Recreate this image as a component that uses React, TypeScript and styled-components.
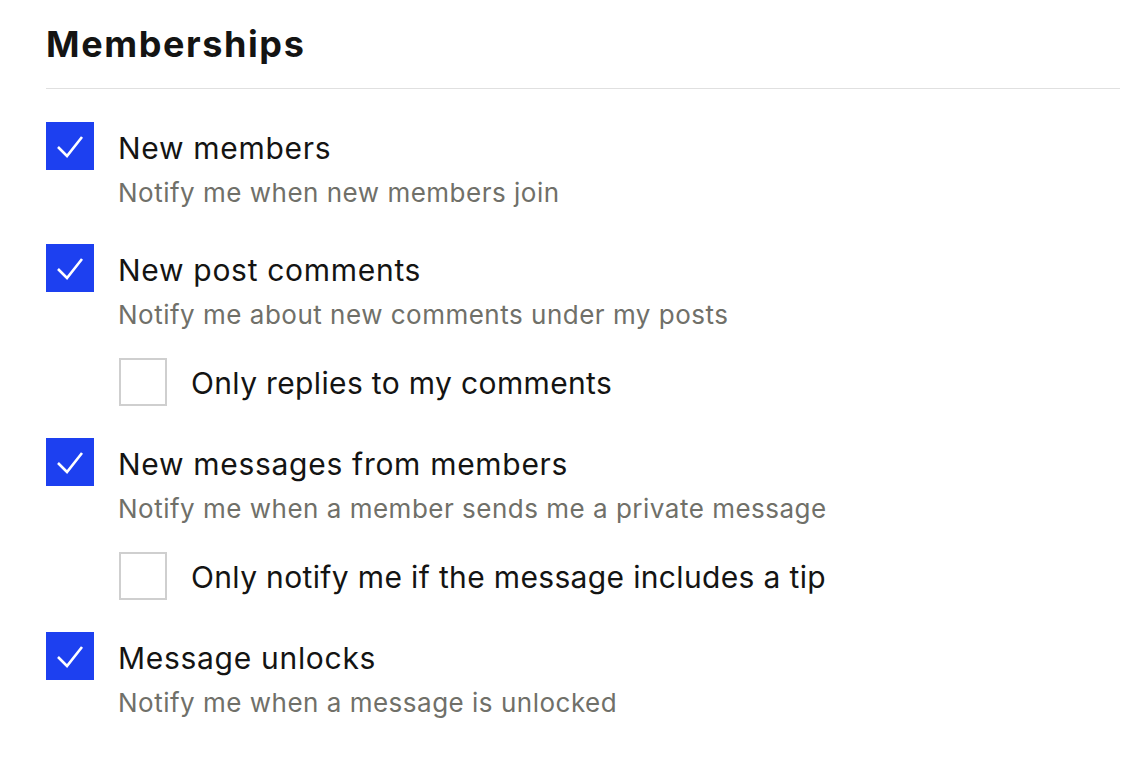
import styled, { createGlobalStyle } from "styled-components";

const GlobalStyle = createGlobalStyle`
  body {
    margin: 0;
    background: #ffffff;
    font-family: Inter, "Liberation Sans", sans-serif;
    color: #141413;
  }
`;

interface Option {
  title: string;
  hint?: string;
  checked: boolean;
  sub?: { title: string; checked: boolean };
}

const options: Option[] = [
  { title: "New members", hint: "Notify me when new members join", checked: true },
  {
    title: "New post comments",
    hint: "Notify me about new comments under my posts",
    checked: true,
    sub: { title: "Only replies to my comments", checked: false },
  },
  {
    title: "New messages from members",
    hint: "Notify me when a member sends me a private message",
    checked: true,
    sub: { title: "Only notify me if the message includes a tip", checked: false },
  },
  { title: "Message unlocks", hint: "Notify me when a message is unlocked", checked: true },
];

const Check = ({ checked }: { checked: boolean }) => (
  <StyledBox $checked={checked}>
    {checked && (
      <svg width="48" height="48" viewBox="0 0 48 48" fill="none">
        <path d="M12 25L21 34L36 15" stroke="#fff" strokeWidth="2.6" />
      </svg>
    )}
  </StyledBox>
);

const App = () => {
  return (
    <>
      <GlobalStyle />
      <StyledSection>
        <StyledTitle>Memberships</StyledTitle>
        <StyledList>
          {options.map((o) => (
            <StyledGroup key={o.title}>
              <StyledRow>
                <Check checked={o.checked} />
                <div>
                  <StyledLabel>{o.title}</StyledLabel>
                  {o.hint && <StyledHint>{o.hint}</StyledHint>}
                </div>
              </StyledRow>
              {o.sub && (
                <StyledSubRow>
                  <Check checked={o.sub.checked} />
                  <StyledSubLabel>{o.sub.title}</StyledSubLabel>
                </StyledSubRow>
              )}
            </StyledGroup>
          ))}
        </StyledList>
      </StyledSection>
    </>
  );
};

const StyledSection = styled.section`
  padding: 20px 20px 0 46px;
`;

const StyledTitle = styled.h2`
  margin: 0;
  font-size: 36px;
  font-weight: 700;
  line-height: 48px;
  letter-spacing: 1.6px;
  padding-bottom: 20px;
  border-bottom: 1px solid #e0e0e0;
`;

const StyledList = styled.div`
  display: flex;
  flex-direction: column;
  gap: 32px;
  padding-top: 33px;
`;

const StyledGroup = styled.div`
  display: flex;
  flex-direction: column;
  gap: 24px;
`;

const StyledRow = styled.div`
  display: flex;
  gap: 24px;
  align-items: flex-start;
`;

const StyledSubRow = styled.div`
  display: flex;
  gap: 24px;
  align-items: center;
  padding-left: 73px;
`;

const StyledBox = styled.div<{ $checked: boolean }>`
  width: 48px;
  height: 48px;
  flex-shrink: 0;
  box-sizing: border-box;
  background: ${(p) => (p.$checked ? "#1d40f0" : "#ffffff")};
  border: ${(p) => (p.$checked ? "none" : "2px solid #cfcfcf")};
`;

const StyledLabel = styled.div`
  font-size: 30px;
  line-height: 52px;
  letter-spacing: 0.7px;
  color: #141413;
`;

const StyledSubLabel = styled(StyledLabel)`
  line-height: 46px;
  letter-spacing: 0.35px;
  padding-top: 2px;
`;

const StyledHint = styled.div`
  font-size: 26px;
  line-height: 38px;
  letter-spacing: 0.5px;
  color: #707069;
`;

export default App;
